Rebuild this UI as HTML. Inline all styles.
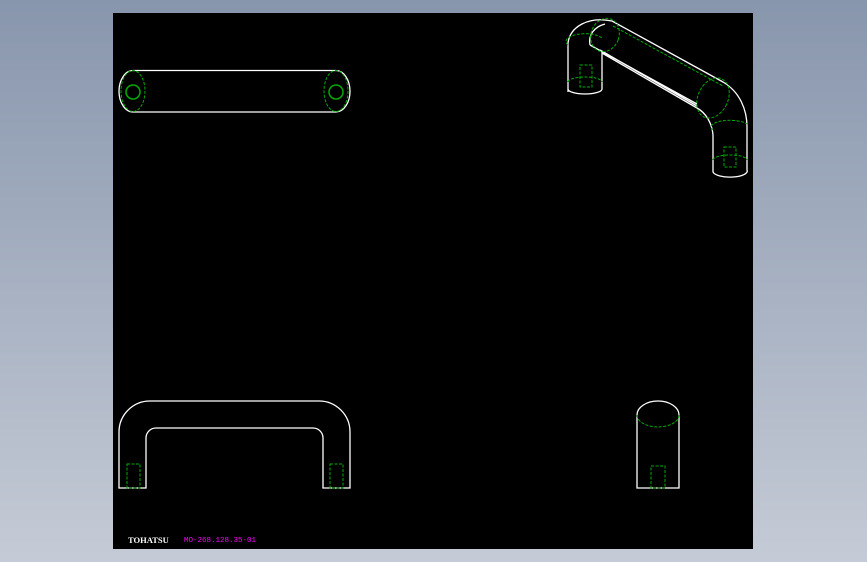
<!DOCTYPE html>
<html><head><style>
html,body{margin:0;padding:0;width:867px;height:562px;overflow:hidden;background:linear-gradient(#8896ad,#c5cbd6);}
svg{position:absolute;left:0;top:0}
</style></head><body>
<svg width="867" height="562" viewBox="0 0 867 562">
<rect x="113" y="13" width="640" height="536" fill="#000"/>
<g fill="none" stroke="#fff" stroke-width="1.3">
<path d="M133 70.5 H336 A14 20.75 0 0 1 336 112 H133 A14 20.75 0 0 1 133 70.5 Z"/>
<path d="M119 488 V432 A31 31 0 0 1 150 401 H319 A31 31 0 0 1 350 432 V488 H323 V438 A10 10 0 0 0 313 428 H156 A10 10 0 0 0 146 438 V488 Z"/>
<path d="M637 488 V415 A21 14 0 0 1 679 415 V488 Z"/>
<path d="M568 92 V43 C570 27 588 16 612 21 L723 82 C740 92 747 110 747 127 V170 A17 6 0 0 1 713 172 V135 C712 123 706 113 697 108"/>
<path d="M568 89 A17 5 0 0 0 602 89 V52"/>
<path d="M590 45 C588 35 594 27 605 24"/>
<path d="M590 45 L697 104 M602 53 L697 108 M600 50 L697 106"/>
</g>
<g fill="none" stroke="#0a0" stroke-width="1" stroke-dasharray="3 1.5">
<ellipse cx="133" cy="91" rx="12" ry="20.5"/>
<ellipse cx="336" cy="91" rx="12" ry="20.5"/>
<path d="M637 415 A21 12 0 0 0 679 415"/>
<rect x="651" y="466" width="14" height="22"/>
<rect x="127" y="464" width="13" height="24"/>
<rect x="330" y="464" width="13" height="24"/>
<ellipse cx="605" cy="35" rx="14" ry="17" transform="rotate(20 605 35)"/>
<ellipse cx="713" cy="98" rx="15" ry="21" transform="rotate(25 713 98)"/>
<path d="M568 45 A17 7 0 0 1 602 38"/>
<path d="M568 82 A17 5 0 0 1 602 82 M713 160 A17 5 0 0 1 747 160 M713 130 A17 6 0 0 1 747 124"/>
<rect x="580" y="65" width="12" height="22"/>
<rect x="724" y="147" width="12" height="20"/>
<path d="M613 26 L723 86"/>
</g>
<g fill="none" stroke="#0a0" stroke-width="1.5">
<circle cx="133" cy="92" r="7"/><circle cx="336" cy="92" r="7"/>
</g>
<text x="128" y="543" fill="#fff" font-family="Liberation Serif,serif" font-weight="bold" font-size="8.5">TOHATSU</text>
<text x="184" y="542" fill="#f0f" font-family="Liberation Mono,monospace" font-size="7.5">MO-268.128.35-01</text>
</svg>
</body></html>
